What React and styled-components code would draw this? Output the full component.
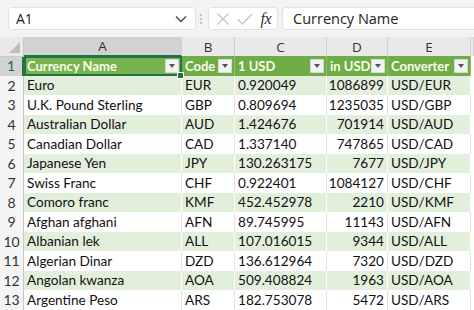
import React from "react";
import styled, { createGlobalStyle } from "styled-components";

const GlobalStyle = createGlobalStyle`
  html, body { margin: 0; padding: 0; background: #ffffff; }
  body { width: 474px; height: 310px; overflow: hidden; }
`;

const rows = [
  ["Euro", "EUR", "0.920049", "1086899", "USD/EUR"],
  ["U.K. Pound Sterling", "GBP", "0.809694", "1235035", "USD/GBP"],
  ["Australian Dollar", "AUD", "1.424676", "701914", "USD/AUD"],
  ["Canadian Dollar", "CAD", "1.337140", "747865", "USD/CAD"],
  ["Japanese Yen", "JPY", "130.263175", "7677", "USD/JPY"],
  ["Swiss Franc", "CHF", "0.922401", "1084127", "USD/CHF"],
  ["Comoro franc", "KMF", "452.452978", "2210", "USD/KMF"],
  ["Afghan afghani", "AFN", "89.745995", "11143", "USD/AFN"],
  ["Albanian lek", "ALL", "107.016015", "9344", "USD/ALL"],
  ["Algerian Dinar", "DZD", "136.612964", "7320", "USD/DZD"],
  ["Angolan kwanza", "AOA", "509.408824", "1963", "USD/AOA"],
  ["Argentine Peso", "ARS", "182.753078", "5472", "USD/ARS"],
];

const headers = ["Currency Name", "Code", "1 USD", "in USD", "Converter"];
const letters = ["A", "B", "C", "D", "E"];
const COLS = "24px 158px 53px 92px 61px 83px 1fr";

const Sheet = styled.div`
  width: 474px;
  height: 310px;
  display: flex;
  flex-direction: column;
  font-family: "Open Sans", "Liberation Sans", sans-serif;
`;

const TopBar = styled.div`
  height: 37px;
  background: #f3f3f3;
  display: flex;
  align-items: center;
  padding: 0 0 0 8px;
  flex-shrink: 0;
`;

const Box = styled.div`
  height: 23px;
  background: #ffffff;
  border: 1px solid #e1e1e1;
  border-radius: 4px;
  box-sizing: border-box;
  display: flex;
  align-items: center;
`;

const NameBox = styled(Box)`
  width: 188px;
  padding: 0 8px 0 7px;
  justify-content: space-between;
  font-size: 14px;
  color: #222;
`;

const Dots = styled.div`
  width: 10px;
  display: flex;
  flex-direction: column;
  align-items: center;
  gap: 2px;
  margin: 0 1px 0 0;
  span {
    width: 2px;
    height: 2px;
    border-radius: 1px;
    background: #b0b0b0;
  }
`;

const IconBox = styled(Box)`
  width: 70px;
  margin-left: 1px;
  padding: 0 6px 0 7px;
  justify-content: space-between;
`;

const Fx = styled.span`
  font-family: "Liberation Serif", "DejaVu Serif", serif;
  font-style: italic;
  font-size: 16px;
  color: #333;
  letter-spacing: -0.5px;
`;

const FormulaBox = styled(Box)`
  flex: 1;
  margin-left: 4px;
  border-right: none;
  border-radius: 4px 0 0 4px;
  padding-left: 10px;
  font-size: 14.5px;
  color: #222;
`;

const Row = styled.div`
  display: grid;
  grid-template-columns: ${COLS};
  height: ${(p) => p.$h || "19.5px"};
  flex-shrink: 0;
`;

const ColHead = styled.div`
  background: ${(p) => (p.$active ? "#d2d2d2" : "#e9e9e9")};
  color: ${(p) => (p.$active ? "#2f2f2f" : "#333")};
  border-right: 1px solid #d0d0d0;
  border-bottom: ${(p) => (p.$active ? "2px solid #217346" : "1px solid #c8c8c8")};
  box-sizing: border-box;
  display: flex;
  align-items: center;
  justify-content: center;
  font-size: 13.5px;
`;

const Corner = styled.div`
  background: #e9e9e9;
  border-right: 1px solid #c8c8c8;
  border-bottom: 1px solid #c8c8c8;
  box-sizing: border-box;
  position: relative;
  &::after {
    content: "";
    position: absolute;
    right: 3px;
    bottom: 3px;
    border-left: 11px solid transparent;
    border-bottom: 11px solid #bdbdbd;
  }
`;

const RowHead = styled.div`
  background: ${(p) => (p.$active ? "#d2d2d2" : "#f4f4f4")};
  color: ${(p) => (p.$active ? "#1e6b42" : "#333")};
  border-right: ${(p) => (p.$active ? "2px solid #217346" : "1px solid #c8c8c8")};
  box-sizing: border-box;
  display: flex;
  align-items: center;
  justify-content: center;
  font-family: "Lato", "Open Sans", sans-serif;
  font-size: 14px;
`;

const Cell = styled.div`
  background: ${(p) => (p.$band ? "#e2efda" : "#ffffff")};
  border-right: 1px solid ${(p) => (p.$band ? "#ffffff" : "#e2e2e2")};
  box-sizing: border-box;
  display: flex;
  align-items: center;
  justify-content: ${(p) => (p.$right ? "flex-end" : "flex-start")};
  padding: 0 3px;
  font-family: "Lato", sans-serif;
  font-size: 13.6px;
  color: #111;
  white-space: nowrap;
  overflow: hidden;
`;

const HeadCell = styled.div`
  background: #70ad47;
  border-right: 1px solid #8fc06a;
  box-sizing: border-box;
  display: flex;
  align-items: center;
  justify-content: space-between;
  padding: 0 2px 0 3px;
  font-family: "Lato", sans-serif;
  font-weight: bold;
  font-size: 13px;
  color: #f6ffe9;
  white-space: nowrap;
  position: relative;
  ${(p) =>
    p.$selected &&
    `
    outline: 2px solid #217346;
    outline-offset: -2px;
    background: #78b34f;
    &::after {
      content: "";
      position: absolute;
      right: -3px;
      bottom: -3px;
      width: 5px;
      height: 5px;
      background: #217346;
      border: 1px solid #fff;
      z-index: 2;
    }
  `}
`;

const FilterBtn = styled.span`
  width: 14px;
  height: 14px;
  background: #f3f3f3;
  border: 1px solid #d8d8d8;
  box-sizing: border-box;
  display: flex;
  align-items: center;
  justify-content: center;
  flex-shrink: 0;
  &::before {
    content: "";
    border-left: 3.5px solid transparent;
    border-right: 3.5px solid transparent;
    border-top: 4px solid #555;
    margin-top: 1px;
  }
`;

const Chevron = () => (
  <svg width="12" height="8" viewBox="0 0 12 8">
    <path d="M1 1.5 L6 6.5 L11 1.5" fill="none" stroke="#444" strokeWidth="1.3" />
  </svg>
);

const Cross = () => (
  <svg width="14" height="14" viewBox="0 0 14 14">
    <path d="M1.5 1.5 L12.5 12.5 M12.5 1.5 L1.5 12.5" stroke="#c4c4c4" strokeWidth="1.3" />
  </svg>
);

const Check = () => (
  <svg width="16" height="12" viewBox="0 0 16 12">
    <path d="M1 6.5 L5.5 11 L15 1" fill="none" stroke="#c4c4c4" strokeWidth="1.3" />
  </svg>
);

const App = () => {
  return (
    <>
      <GlobalStyle />
      <Sheet>
        <TopBar>
          <NameBox>
            <span>A1</span>
            <Chevron />
          </NameBox>
          <Dots>
            <span />
            <span />
            <span />
          </Dots>
          <IconBox>
            <Cross />
            <Check />
            <Fx>fx</Fx>
          </IconBox>
          <FormulaBox>Currency Name</FormulaBox>
        </TopBar>
        <Row $h="19px">
          <Corner />
          {letters.map((l, i) => (
            <ColHead key={l} $active={i === 0}>
              {l}
            </ColHead>
          ))}
          <ColHead />
        </Row>
        <Row>
          <RowHead $active>1</RowHead>
          {headers.map((h, i) => (
            <HeadCell key={h} $selected={i === 0}>
              <span>{h}</span>
              <FilterBtn />
            </HeadCell>
          ))}
          <Cell />
        </Row>
        {rows.map((r, idx) => {
          const band = idx % 2 === 0;
          return (
            <Row key={r[1]}>
              <RowHead>{idx + 2}</RowHead>
              <Cell $band={band}>{r[0]}</Cell>
              <Cell $band={band}>{r[1]}</Cell>
              <Cell $band={band}>{r[2]}</Cell>
              <Cell $band={band} $right>
                {r[3]}
              </Cell>
              <Cell $band={band}>{r[4]}</Cell>
              <Cell />
            </Row>
          );
        })}
      </Sheet>
    </>
  );
};

export default App;
